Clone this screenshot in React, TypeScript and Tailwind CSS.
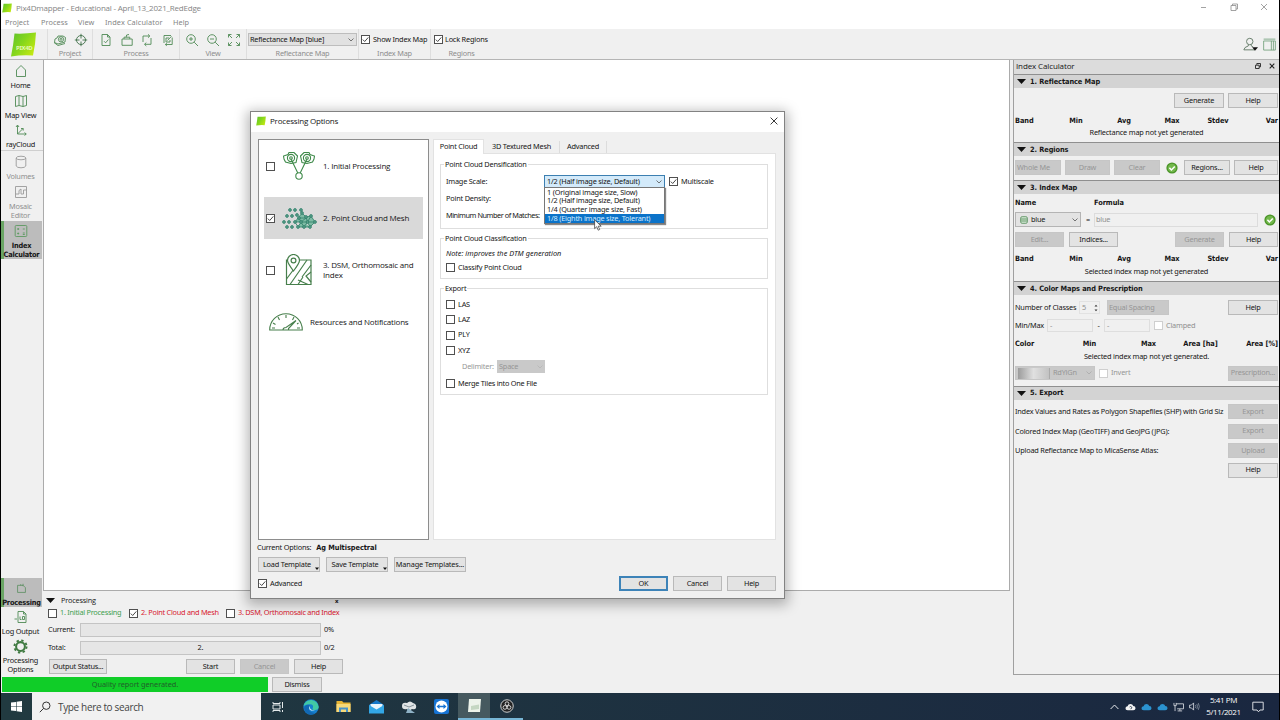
import type { ReactNode } from "react"
import clsx from "clsx"

const GREEN = "#4f8a55"

type BoxProps = { className?: string; children?: ReactNode }

function Button({ className, children, disabled, primary }: BoxProps & { disabled?: boolean; primary?: boolean }) {
  return (
    <button
      className={clsx(
        "flex h-[15px] shrink-0 items-center justify-center overflow-hidden whitespace-nowrap",
        primary && "border-2 border-[#3d83b8] bg-[#e3e3e3]",
        disabled && "border border-[#c6c6c6] bg-[#c9c9c9] text-[#969696]",
        !primary && !disabled && "border border-[#b9b9b9] bg-[#e3e3e3]",
        className,
      )}
    >
      {children}
    </button>
  )
}

function Check({ checked, faded, className }: { checked?: boolean; faded?: boolean; className?: string }) {
  return (
    <span
      className={clsx(
        "block h-[9px] w-[9px] shrink-0 border bg-white",
        faded ? "border-[#cfcfcf]" : "border-[#505050]",
        className,
      )}
    >
      {checked && (
        <svg viewBox="0 0 7 7" className="block h-[7px] w-[7px]" fill="none" stroke="#333" strokeWidth="0.9">
          <path d="M0.8 3.6 2.7 5.5 6.3 1.4" />
        </svg>
      )}
    </span>
  )
}

function Chevron({ color = "#555" }: { color?: string }) {
  return (
    <svg viewBox="0 0 6 4" className="h-1 w-1.5 shrink-0" fill="none" stroke={color} strokeWidth="0.8">
      <path d="M0.5 0.5 3 3 5.5 0.5" />
    </svg>
  )
}

function Pix4dMark({ className }: { className?: string }) {
  return (
    <svg viewBox="0 0 26 25" className={className}>
      <defs>
        <linearGradient id="pix" x1="0" y1="0" x2="1" y2="0.7">
          <stop offset="0" stopColor="#5cc02c" />
          <stop offset="0.5" stopColor="#84d61c" />
          <stop offset="1" stopColor="#c2e812" />
        </linearGradient>
      </defs>
      <path d="M4 1.5 Q14 2 25.5 0.5 Q25 12 22.5 23.5 Q12 22.5 0.5 24.5 Q3 12 4 1.5Z" fill="url(#pix)" />
    </svg>
  )
}

function Icon({ children, size = "h-[14px] w-[14px]", color = GREEN }: { children: ReactNode; size?: string; color?: string }) {
  return (
    <svg viewBox="0 0 14 14" className={clsx("block shrink-0", size)} fill="none" stroke={color} strokeWidth="0.9">
      {children}
    </svg>
  )
}

function ToolGroup({ label, className, children }: BoxProps & { label: string }) {
  return (
    <div className={clsx("flex shrink-0 flex-col border-r border-[#dedede]", className)}>
      <div className="flex h-[21px] items-center">{children}</div>
      <div className="flex h-[8px] items-center justify-center text-[#8d8d8d]">{label}</div>
    </div>
  )
}

function Toolbar() {
  return (
    <div className="flex h-[31px] shrink-0 border-b border-[#b5b5b5] bg-[#f0f0f0]">
      <div className="flex w-[47px] shrink-0 items-center border-r border-[#dedede] pl-[9px]">
        <div className="relative">
          <Pix4dMark className="h-[25px] w-[27px]" />
          <span className="absolute left-[6px] top-[13px] text-[6px] font-bold leading-none tracking-[-0.3px] text-[#e2f8b8]">PIX4D</span>
        </div>
      </div>
      <ToolGroup label="Project" className="w-[45px]">
        <div className="flex gap-[7px] pl-[5px]">
          <Icon>
            <path d="M2 6 4 5 5 3H10L12.5 4.5 12 9 5 11 1.5 9.5Z" />
            <circle cx="8" cy="6.3" r="2.6" />
            <circle cx="8" cy="6.3" r="1" />
            <path d="M1 9.5 5 12.5 12 10.5" />
          </Icon>
          <Icon color="#3f6f48">
            <circle cx="7" cy="7" r="4.5" />
            <path d="M7 0.8V5.5M7 8.5V13.2M0.8 7H5.5M8.5 7H13.2" />
          </Icon>
        </div>
      </ToolGroup>
      <ToolGroup label="Process" className="w-[87px]">
        <div className="flex gap-[6.7px] pl-[6px]">
          <Icon>
            <path d="M3 1.5H8.5L11 4V12.5H3ZM8.5 1.5V4H11M5 8.2 6.6 9.8 9.4 6.6" />
          </Icon>
          <Icon>
            <path d="M2 6H12.2V12.3H2ZM4 6V4.2H9.8V6M6.2 4.2 6.6 2 9 1.5" />
          </Icon>
          <Icon>
            <path d="M3 9V3H9.5M8 1.3 9.8 3 8 4.7M11 5V11.3H4.8M6.3 9.6 4.5 11.3 6.3 13" />
          </Icon>
          <Icon>
            <path d="M3 10V2.5H10M11.2 4.5V11.5H4.5M5 5H8M5 5V9H9V7M6.5 7.5 10.5 3.3M5.8 10.2 4.3 11.5 5.8 12.8" />
          </Icon>
        </div>
      </ToolGroup>
      <ToolGroup label="View" className="w-[67px]">
        <div className="flex gap-[7px] pl-[5px]">
          <Icon>
            <circle cx="6" cy="6" r="4.3" />
            <path d="M9.2 9.2 13 13M6 4V8M4 6H8" />
          </Icon>
          <Icon>
            <circle cx="6" cy="6" r="4.3" />
            <path d="M9.2 9.2 13 13M4 6H8" />
          </Icon>
          <Icon>
            <path d="M1.5 4.5V1.5H4.5M1.5 1.5 5 5M9.5 1.5H12.5V4.5M12.5 1.5 9 5M1.5 9.5V12.5H4.5M1.5 12.5 5 9M12.5 9.5V12.5H9.5M12.5 12.5 9 9" />
          </Icon>
        </div>
      </ToolGroup>
      <ToolGroup label="Reflectance Map" className="w-[112px]">
        <div className="ml-[1px] flex h-[13px] w-[109px] items-center justify-between border border-[#bdbdbd] bg-[#e1e1e1] pl-[1px] pr-[2px]">
          Reflectance Map [blue]
          <Chevron />
        </div>
      </ToolGroup>
      <ToolGroup label="Index Map" className="w-[72px]">
        <Check checked className="ml-[2px] mr-[3px]" />
        Show Index Map
      </ToolGroup>
      <ToolGroup label="Regions" className="w-[61px] border-r-0">
        <Check checked className="ml-[3px] mr-[2px]" />
        Lock Regions
      </ToolGroup>
      <div className="ml-auto flex items-center gap-[5px] pr-[3px]">
        <Icon size="h-[15px] w-[15px]" color="#667d6a">
          <circle cx="6.3" cy="4.2" r="3" />
          <path d="M5 7V8.3Q1 9.5 0.8 12H11M7.7 7V8.3L9.5 9.3" />
          <path d="M8.5 9.5H14L11.2 12.8Z" fill="#111" stroke="none" />
        </Icon>
        <Icon size="h-[13px] w-[13px]" color="#6f9f78">
          <path d="M0.7 1.2H13.3M0.7 3.2H13.3V13H0.7ZM9 3.2V13M11.2 3.2V13" />
        </Icon>
      </div>
    </div>
  )
}

function SideItem({ label, icon, className, selected, faded }: { label: string; icon: ReactNode; className?: string; selected?: boolean; faded?: boolean }) {
  return (
    <div
      className={clsx(
        "flex shrink-0 flex-col items-center",
        selected ? "mr-px border-l-[3px] border-[#6aa564] bg-[#bcbcbc] font-bold" : "pr-[3px]",
        faded && "text-[#8f8f8f]",
        className,
      )}
    >
      <div className={clsx("flex h-[20px] shrink-0 items-center justify-center", selected && "-ml-[4px]")}>{icon}</div>
      <div className={clsx("whitespace-pre text-center leading-[9px]", selected && "-ml-[3px] font-['DejaVu_Sans_Condensed','Noto_Sans'] tracking-[-0.2px]")}>{label}</div>
    </div>
  )
}

function Sidebar() {
  return (
    <div className="flex w-[42px] shrink-0 flex-col pt-[1px]">
      <SideItem label="Home" className="h-[29.5px]" icon={<Icon><path d="M2.5 6 7 1.5 11.5 6V12.5H2.5Z" /></Icon>} />
      <SideItem label="Map View" className="h-[29.5px]" icon={<Icon><path d="M1.5 2.5 5 1.5V11.5L1.5 12.5ZM5 1.5 9 2.5V12.5L5 11.5M9 2.5 12.5 1.5V11.5L9 12.5" /></Icon>} />
      <SideItem label="rayCloud" className="h-[30px]" icon={<Icon><path d="M3.5 11V2.5M2 4 3.5 2 5 4M3.5 11H12M10.5 9.6 12.3 11 10.5 12.5M3.5 11 9 5.5M7 5.5H9.2V7.6" /></Icon>} />
      <div className="mb-[1px] h-px shrink-0 bg-[#cfcfcf]" />
      <SideItem faded label="Volumes" className="h-[29.5px]" icon={<Icon color="#9a9a9a"><ellipse cx="7" cy="3" rx="4.8" ry="1.8" /><path d="M2.2 3V11Q3 12.8 7 12.8T11.8 11V3" /></Icon>} />
      <SideItem faded label={"Mosaic\nEditor"} className="h-[39px]" icon={<Icon color="#9a9a9a"><path d="M1.5 1.5H12.5V12.5H1.5ZM1.5 9H5V5.5L7 4V9H9.5V5H12.5" /></Icon>} />
      <SideItem
        selected
        label={"Index\nCalculator"}
        className="h-[38px]"
        icon={
          <Icon color="#5d9a62">
            <rect x="1.2" y="1.5" width="11.6" height="11" rx="1" />
            <path d="M4.2 4V6M3.2 5H5.2M8.8 5H10.8M4.2 8.5V10.5M3.2 9.5H5.2M8.8 9H10.8M8.8 10.5H10.8" />
          </Icon>
        }
      />
      <div className="grow" />
      <SideItem
        selected
        label="Processing"
        className="h-[29px]"
        icon={<Icon size="h-[11px] w-[11px]"><path d="M2 3H9L12 6V12H2ZM9 1V4M6 3V1.5" /></Icon>}
      />
      <SideItem
        label="Log Output"
        className="h-[29px]"
        icon={<Icon><path d="M4 1.5H9.5L12 4V12.5H4ZM9.5 1.5V4H12M0.5 9H3M6 6.5V9.5H7.5M8.5 6.5H10.5V9.5H8.5Z" /></Icon>}
      />
      <SideItem
        label={"Processing\nOptions"}
        className="h-[39px]"
        icon={
          <Icon size="h-[15px] w-[15px]" color="#3f7a41">
            <circle cx="7" cy="7" r="4.1" strokeWidth="1.9" />
            <circle cx="7" cy="7" r="5.7" strokeWidth="1.7" strokeDasharray="2.2 2.277" />
          </Icon>
        }
      />
    </div>
  )
}

function Section({ title, className, children }: BoxProps & { title: string }) {
  return (
    <section className={clsx("flex shrink-0 flex-col", className)}>
      <h2 className="flex h-[14px] shrink-0 items-center gap-[4px] border-t border-[#8f8f8f] bg-[#d3d3d3] pl-[3px] font-['DejaVu_Sans_Condensed','Noto_Sans'] font-bold tracking-[-0.06px]">
        <svg viewBox="0 0 9 5" className="h-[5px] w-[9px]"><path d="M0 0H9L4.5 5Z" fill="#111" /></svg>
        {title}
      </h2>
      {children}
    </section>
  )
}

function StatsHeader() {
  return (
    <div className="grid h-[10px] grid-cols-[37px_48px_48px_48px_44px_1fr] items-center text-center font-['DejaVu_Sans_Condensed','Noto_Sans'] font-bold tracking-[-0.05px]">
      <span className="text-left">Band</span>
      <span>Min</span>
      <span>Avg</span>
      <span>Max</span>
      <span>Stdev</span>
      <span className="text-right">Var</span>
    </div>
  )
}

function OkBadge({ className }: { className?: string }) {
  return (
    <svg viewBox="0 0 12 12" className={clsx("h-3 w-3 shrink-0", className)}>
      <circle cx="6" cy="6" r="5.6" fill="#4b9429" />
      <circle cx="6" cy="6" r="4.3" fill="#72b84b" />
      <path d="M3.4 5.8 5.4 8 8.8 4.4" fill="none" stroke="#fff" strokeWidth="1.5" />
    </svg>
  )
}

function IndexCalculator() {
  return (
    <aside className="flex h-[615px] w-[266px] shrink-0 flex-col border border-r-0 border-t-0 border-[#a0a0a0]">
      <div className="flex h-[14px] shrink-0 items-center bg-[#dcdcdc] pb-[2px] pl-[2px] pr-[4px] font-['Open_Sans'] text-[8px] tracking-[-0.12px]">
        <span className="grow">Index Calculator</span>
        <svg viewBox="0 0 6 6" className="mr-[8px] h-[6px] w-[6px]" fill="none" stroke="#222" strokeWidth="0.9"><path d="M1.8 1.8V0.5H5.5V3.8H4.2M0.5 2.2H4.2V5.5H0.5Z" /></svg>
        <svg viewBox="0 0 6 6" className="h-[6px] w-[6px]" fill="none" stroke="#222" strokeWidth="1.1"><path d="M0.7 0.7 5.3 5.3M5.3 0.7 0.7 5.3" /></svg>
      </div>
      <Section title="1. Reflectance Map" className="h-[68px]">
        <div className="mt-[5px] flex justify-end gap-[4px] pr-px">
          <Button className="w-[50px]">Generate</Button>
          <Button className="w-[50px]">Help</Button>
        </div>
        <div className="pl-px pr-px pt-[8px]"><StatsHeader /></div>
        <p className="h-[12px] text-center leading-[12px]">Reflectance map not yet generated</p>
      </Section>
      <Section title="2. Regions" className="h-[38px]">
        <div className="flex items-center pl-px pt-[4px]">
          <Button disabled className="w-[46px] justify-start pl-px tracking-[-0.2px]">Whole Me</Button>
          <Button disabled className="ml-[4px] w-[45px]">Draw</Button>
          <Button disabled className="ml-[4px] w-[46px]">Clear</Button>
          <OkBadge className="mx-[6px]" />
          <Button className="w-[46px]">Regions...</Button>
          <Button className="ml-[4px] w-[44px]">Help</Button>
        </div>
      </Section>
      <Section title="3. Index Map" className="h-[101px]">
        <div className="mt-[4px] flex h-[10px] items-center pl-px font-['DejaVu_Sans_Condensed','Noto_Sans'] font-bold tracking-[-0.05px]">
          <span className="w-[79px]">Name</span>
          <span>Formula</span>
        </div>
        <div className="mt-[4px] flex h-[15px] items-center pl-px">
          <div className="flex h-[15px] w-[66px] items-center border border-[#b4b4b4] bg-[#e3e3e3] pl-[4px] pr-[2px]">
            <svg viewBox="0 0 8 8" className="mr-[3px] h-2 w-2" fill="#c8dfca" stroke="#4f8a55" strokeWidth="0.7"><rect x="0.6" y="0.6" width="6.8" height="6.8" rx="1.6" /><path d="M0.6 3H7.4M0.6 5H7.4" /></svg>
            <span className="grow">blue</span>
            <Chevron />
          </div>
          <span className="w-[13px] pl-[1px] text-center">=</span>
          <div className="flex h-[14px] w-[164px] items-center border border-[#dcdcdc] pl-[1px] text-[#8f8f8f]">blue</div>
          <OkBadge className="ml-[6px]" />
        </div>
        <div className="mt-[5px] flex pl-px pr-px">
          <Button disabled className="w-[49px]">Edit...</Button>
          <Button className="ml-[5px] w-[49px]">Indices...</Button>
          <Button disabled className="ml-auto w-[49px]">Generate</Button>
          <Button className="ml-[5px] w-[49px]">Help</Button>
        </div>
        <div className="px-px pt-[7px]"><StatsHeader /></div>
        <p className="h-[13px] text-center leading-[14px]">Selected index map not yet generated</p>
      </Section>
      <Section title="4. Color Maps and Prescription" className="h-[104.5px]">
        <div className="mt-[5px] flex items-center px-px">
          <span className="w-[64px]">Number of Classes</span>
          <span className="flex h-[13px] w-[21px] items-center justify-between border border-[#e2e2e2] pl-[2px] text-[#8f8f8f]">
            5
            <svg viewBox="0 0 4 8" className="mr-px h-2 w-1" fill="#333"><path d="M0.5 2.5 2 0.8 3.5 2.5ZM0.5 5.5 2 7.2 3.5 5.5Z" /></svg>
          </span>
          <Button disabled className="ml-[7px] h-[13px] w-[62px] justify-start pl-px">Equal Spacing</Button>
          <Button className="ml-auto w-[50px]">Help</Button>
        </div>
        <div className="mt-[4px] flex h-[13px] items-center pl-px">
          <span className="w-[32px]">Min/Max</span>
          <span className="h-[13px] w-[46px] border border-[#dedede] pl-[2px] leading-[10px] text-[#8f8f8f]">-</span>
          <span className="w-[11px] text-center">-</span>
          <span className="h-[13px] w-[46px] border border-[#dedede] pl-[2px] leading-[10px] text-[#8f8f8f]">-</span>
          <Check faded className="ml-[4px] mr-[3px]" />
          <span className="text-[#8f8f8f]">Clamped</span>
        </div>
        <div className="mt-[7px] grid h-[10px] shrink-0 grid-cols-[45px_59px_59px_45px_1fr] items-center px-px text-center font-['DejaVu_Sans_Condensed','Noto_Sans'] font-bold tracking-[-0.05px]">
          <span className="text-left">Color</span>
          <span>Min</span>
          <span>Max</span>
          <span className="-mx-2">Area [ha]</span>
          <span className="text-right">Area [%]</span>
        </div>
        <p className="h-[13px] shrink-0 text-center leading-[14px]">Selected index map not yet generated.</p>
        <div className="mt-[4px] flex h-[14px] items-center px-px text-[#969696]">
          <div className="flex h-[14px] w-[80px] items-center border border-[#c6c6c6] bg-[#c9c9c9] px-[2px]">
            <span className="mr-[3px] h-[11px] w-[32px] border-r border-[#aaa] bg-linear-to-r from-[#9c9c9c] via-[#e0e0e0] to-[#c2c2c2]" />
            <span className="grow">RdYlGn</span>
            <Chevron color="#aaa" />
          </div>
          <Check faded className="ml-[4px] mr-[3px]" />
          Invert
          <Button disabled className="ml-auto w-[50px]">Prescription...</Button>
        </div>
      </Section>
      <Section title="5. Export">
        {[
          ["Index Values and Rates as Polygon Shapefiles (SHP) with Grid Siz", "Export"],
          ["Colored Index Map (GeoTIFF) and GeoJPG (JPG):", "Export"],
          ["Upload Reflectance Map to MicaSense Atlas:", "Upload"],
          ["", "Help"],
        ].map(([text, action], i) => (
          <div key={i} className="mt-[4.5px] flex h-[15px] items-center justify-between px-px">
            <span className="whitespace-nowrap leading-[13px]">{text}</span>
            <Button disabled={action !== "Help"} className="w-[50px]">{action}</Button>
          </div>
        ))}
      </Section>
    </aside>
  )
}

function ProcessingPanel() {
  return (
    <div className="flex h-[84px] shrink-0 flex-col pl-[5px]">
      <div className="flex h-[17px] items-center pt-[2px]">
        <svg viewBox="0 0 9 5" className="-ml-[2px] mr-[6px] h-[5px] w-[9px]"><path d="M0 0H9L4.5 5Z" fill="#111" /></svg>
        <span className="w-[274px] font-['Open_Sans']">Processing</span>
        <span className="text-[6px] font-bold">x</span>
      </div>
      <div className="flex h-[10px] items-center tracking-[-0.26px] text-[#d8182f]">
        <Check className="mr-[3px]" />
        <span className="w-[69px] text-[#3f9f50]">1. Initial Processing</span>
        <Check checked className="mr-[3px]" />
        <span className="w-[85px]">2. Point Cloud and Mesh</span>
        <Check className="mr-[3px]" />
        <span>3. DSM, Orthomosaic and Index</span>
      </div>
      <div className="mt-[5px] flex h-[14px] items-center">
        <span className="w-[32px]">Current:</span>
        <span className="h-[14px] w-[241px] border border-[#c4c4c4] bg-[#e6e6e6]" />
        <span className="ml-[3px]">0%</span>
      </div>
      <div className="mt-[4px] flex h-[14px] items-center">
        <span className="w-[32px]">Total:</span>
        <span className="flex h-[14px] w-[241px] items-center justify-center border border-[#c4c4c4] bg-[#e6e6e6]">2.</span>
        <span className="ml-[3px]">0/2</span>
      </div>
      <div className="mt-[4px] flex pl-px">
        <Button className="w-[58px]">Output Status...</Button>
        <Button className="ml-[79px] w-[49px]">Start</Button>
        <Button disabled className="ml-[5px] w-[49px]">Cancel</Button>
        <Button className="ml-[5px] w-[49px]">Help</Button>
      </div>
    </div>
  )
}

function OptionRow({ text, icon, checked, selected, noCheck }: { text: string; icon: ReactNode; checked?: boolean; selected?: boolean; noCheck?: boolean }) {
  return (
    <div className={clsx("flex h-[42px] shrink-0 items-center whitespace-pre", selected && "bg-[#d9d9d9]", noCheck ? "pl-[5px]" : "pl-[2px]")}>
      {!noCheck && <Check checked={checked} className="mr-[7px]" />}
      <div className={clsx("flex shrink-0", noCheck ? "w-[41px]" : "w-[41px]")}>{icon}</div>
      <span className="font-['Open_Sans'] text-[8px] leading-[10px] tracking-[-0.2px]">{text}</span>
    </div>
  )
}

const CLOUD_DOTS = [
  [8, 3], [13, 3], [19, 3], [5, 9], [10, 9], [15, 8], [2, 15], [7, 15], [5, 20], [10, 20],
]
const MESH_DOTS = [
  [20, 6], [17, 11], [24, 10], [29, 9], [13, 15], [19, 15], [25.5, 15], [33, 15], [16, 20], [22, 20], [28, 20],
]

function StepList() {
  return (
    <div className="flex h-[401px] w-[171px] shrink-0 flex-col gap-[10px] border border-[#8d8d8d] bg-white px-[5px] pt-[5px]">
      <OptionRow
        text="1. Initial Processing"
        icon={
          <svg viewBox="0 0 34 30" className="h-[30px] w-[34px]" fill="none" stroke="#3f8a4a" strokeWidth="1.1">
            <path d="M2 8 1.5 5 6 3.500 7 1.500H12L15.5 5 14 11.500 9 12.500 3.500 11ZM32 8 32.500 5 28 3.500 27 1.500H22L18.5 5 20 11.500 25 12.500 30.500 11Z" />
            <circle cx="9" cy="7" r="3.6" /><circle cx="25" cy="7" r="3.6" />
            <circle cx="9" cy="7" r="1.3" /><circle cx="25" cy="7" r="1.3" />
            <path d="M9 8 15.8 22M25 8 18.2 22" /><circle cx="17" cy="25" r="3.2" />
          </svg>
        }
      />
      <OptionRow
        selected
        checked
        text="2. Point Cloud and Mesh"
        icon={
          <svg viewBox="0 0 35 23" className="h-[23px] w-[35px]" fill="#5aa08c" stroke="#2f7f68" strokeWidth="0.8">
            <path d="M20 6 13 15 16 20H28L33 15 29 9 24 10ZM17 11H24L19 15H25.500L29 9M13 15H19L16 20M17 11 19 15 22 20 25.500 15 28 20M24 10 25.500 15H33" fill="#7dbba4" />
            {[...CLOUD_DOTS, ...MESH_DOTS].map(([x, y], i) => <circle key={i} cx={x} cy={y} r="1.4" />)}
          </svg>
        }
      />
      <OptionRow
        text={"3. DSM, Orthomosaic and\nIndex"}
        icon={
          <svg viewBox="0 0 34 32" className="h-[32px] w-[34px]" fill="none" stroke="#477f4c" strokeWidth="1.2">
            <path d="M6 6H4.500V30.500H29V6H17" />
            <path d="M4.500 25 15 11M8 30.500 25 6M16 30.500 21 23M29 11 20 23M29 18 24 22 29 28M16 26 26 30.500" />
            <path d="M11.500 17Q5.500 9 5.500 6.500A6 6 0 0 1 17.500 6.500Q17.500 9 11.500 17Z" fill="#fff" />
            <circle cx="11.500" cy="6.500" r="2.400" />
          </svg>
        }
      />
      <OptionRow
        noCheck
        text="Resources and Notifications"
        icon={
          <svg viewBox="0 0 34 20" className="h-[20px] w-[34px]" fill="none" stroke="#477f4c" strokeWidth="1.1">
            <path d="M0.700 18A16.300 16.300 0 0 1 33.300 18Z" />
            <path d="M17 3V6M9 5 10.500 8M4 11 6.500 12.500M3 16H6M25 5 23.500 8M28 16H31M29.500 11 28 12M14 18Q14 15.500 17 15.500L27 8.500 19.500 16.500V18" />
          </svg>
        }
      />
    </div>
  )
}

function Group({ title, className, children }: BoxProps & { title: string }) {
  return (
    <fieldset className={clsx("w-[328px] shrink-0 border border-[#dedede] pl-[5px]", className)}>
      <legend className="-ml-[2px] h-[8px] px-[1px] leading-[8px]">{title}</legend>
      {children}
    </fieldset>
  )
}

const SCALES = [
  "1 (Original image size, Slow)",
  "1/2 (Half image size, Default)",
  "1/4 (Quarter image size, Fast)",
  "1/8 (Eighth image size, Tolerant)",
]

function PointCloudTab() {
  return (
    <div className="flex min-h-0 grow flex-col border border-[#e2e2e2] bg-white pl-[6px] pt-[6px]">
      <Group title="Point Cloud Densification" className="h-[69px]">
        <div className="mt-[7px] flex h-[13px] items-center">
          <span className="w-[98px]">Image Scale:</span>
          <div className="relative flex h-[13px] w-[121px] items-center justify-between border border-[#3c7fb1] bg-[#d3eafa] pl-[2px] pr-[2px]">
            1/2 (Half image size, Default)
            <Chevron />
            <ul className="absolute -left-px top-[11px] z-10 w-[121px] border border-[#777] bg-white shadow-[1px_1px_1px_#888]">
              {SCALES.map((scale, i) => (
                <li key={scale} className={clsx("flex h-[8.7px] items-center whitespace-nowrap pl-[2px]", i === 3 && "bg-[#0b73c9] text-[#d5ecff]")}>
                  {scale}
                </li>
              ))}
            </ul>
            <svg viewBox="0 0 8 12" className="absolute left-[49px] top-[43px] z-20 h-[12px] w-[8px]">
              <path d="M0.600 0.800V9.600L2.700 7.700 4.200 11.200 5.700 10.500 4.200 7.200H7.200Z" fill="#fff" stroke="#333" strokeWidth="0.700" />
            </svg>
          </div>
          <Check checked className="ml-[4px] mr-[3px]" />
          Multiscale
        </div>
        <p className="mt-[4px] h-[13px] leading-[13px]">Point Density:</p>
        <p className="mt-[4px] h-[13px] whitespace-nowrap leading-[13px] tracking-[-0.46px]">Minimum Number of Matches:</p>
      </Group>
      <Group title="Point Cloud Classification" className="mt-[5px] h-[45px]">
        <p className="mt-[7px] h-[9px] italic leading-[9px] tracking-[0.02px]">Note: improves the DTM generation</p>
        <div className="mt-[5px] flex items-center gap-[3px]"><Check />Classify Point Cloud</div>
      </Group>
      <Group title="Export" className="mt-[5px] h-[111px]">
        <div className="mt-[8px] flex flex-col gap-[6.300px]">
          {["LAS", "LAZ", "PLY", "XYZ"].map((format) => (
            <div key={format} className="flex h-[9px] items-center gap-[3px]"><Check />{format}</div>
          ))}
        </div>
        <div className="mt-[5px] flex h-[14px] items-center text-[#969696]">
          <span className="w-[51px] pl-[16px]">Delimiter:</span>
          <span className="flex h-[13px] w-[48px] items-center justify-between bg-[#c9c9c9] px-[2px]">Space<Chevron color="#b5b5b5" /></span>
        </div>
        <div className="mt-[5px] flex items-center gap-[3px] tracking-[-0.25px]"><Check />Merge Tiles into One File</div>
      </Group>
    </div>
  )
}

function ProcessingOptionsDialog() {
  return (
    <div className="absolute left-[249px] top-[111px] flex h-[488px] w-[535px] flex-col border border-[#828282] bg-[#f0f0f0] shadow-[0_3px_12px_3px_rgba(0,0,0,0.28)]">
      <div className="flex h-[20px] shrink-0 items-center bg-white pb-[2px] pl-[5px] pr-[6px] font-['Open_Sans'] text-[8px] tracking-[-0.2px]">
        <Pix4dMark className="mr-[4px] h-[10px] w-[10px]" />
        <span className="grow">Processing Options</span>
        <svg viewBox="0 0 8 8" className="h-[8px] w-[8px]" fill="none" stroke="#222" strokeWidth="0.9"><path d="M0.600 0.600 7.400 7.400M7.400 0.600 0.600 7.400" /></svg>
      </div>
      <div className="flex h-[408px] shrink-0 gap-[4px] pl-[7px] pt-[7px]">
        <StepList />
        <div className="flex h-[401px] w-[343px] flex-col">
          <div className="flex h-[14px] shrink-0 items-end">
            <span className="z-10 -mb-px flex h-[15px] w-[51px] items-center justify-center border border-b-0 border-[#e2e2e2] bg-white">Point Cloud</span>
            <span className="flex h-[12px] w-[76px] items-center justify-center border-r border-[#dcdcdc]">3D Textured Mesh</span>
            <span className="flex h-[12px] w-[47px] items-center justify-center border-r border-[#dcdcdc]">Advanced</span>
          </div>
          <PointCloudTab />
        </div>
      </div>
      <div className="mt-[3px] flex h-[10px] shrink-0 items-center pl-[6px]">
        Current Options:
        <b className="ml-[5px] font-['DejaVu_Sans_Condensed','Noto_Sans'] tracking-[-0.05px]">Ag Multispectral</b>
      </div>
      <div className="mt-[4px] flex shrink-0 gap-[6px] pl-[7px]">
        {["Load Template", "Save Template"].map((label) => (
          <Button key={label} className="w-[62px] gap-[4px] pl-[4px]">
            {label}
            <svg viewBox="0 0 4 3" className="mt-[7px] h-[3px] w-[4px] shrink-0"><path d="M0 0.500H4L2 3Z" fill="#111" /></svg>
          </Button>
        ))}
        <Button className="w-[72px] tracking-[-0.15px]">Manage Templates...</Button>
      </div>
      <div className="mt-[4px] flex h-[15px] shrink-0 items-center pl-[7px] pr-[8px]">
        <Check checked className="mr-[3px]" />
        <span className="grow">Advanced</span>
        <Button primary className="w-[49px]">OK</Button>
        <Button className="ml-[5px] w-[49px]">Cancel</Button>
        <Button className="ml-[5px] w-[49px]">Help</Button>
      </div>
    </div>
  )
}

function Taskbar() {
  return (
    <div className="flex h-[27px] shrink-0 items-center bg-linear-to-r from-[#213a40] to-[#1a2740] text-white">
      <div className="flex w-[31px] shrink-0 justify-center">
        <svg viewBox="0 0 11 11" className="ml-[-1px] h-[11px] w-[11px]" fill="#fff"><path d="M0 1.600 5 0.900V5.200H0ZM5.600 0.800 11 0V5.200H5.600ZM0 5.800H5V10.100L0 9.400ZM5.600 5.800H11V11L5.600 10.200Z" /></svg>
      </div>
      <div className="flex h-[27px] w-[229px] shrink-0 items-center bg-[#f1f1f1] pl-[7px] font-['Open_Sans'] text-[10px] tracking-[-0.35px] text-[#444]">
        <svg viewBox="0 0 12 12" className="mr-[7px] h-[12px] w-[12px]" fill="none" stroke="#333" strokeWidth="1"><circle cx="7.300" cy="4.700" r="3.700" /><path d="M4.600 7.400 0.800 11.200" /></svg>
        Type here to search
      </div>
      <div className="flex h-full items-center">
        <span className="flex w-[33px] justify-center">
          <svg viewBox="0 0 12 12" className="h-3 w-3" fill="none" stroke="#e4e9ea" strokeWidth="1"><path d="M1 1V2.500H8V1M1 11V9.500H8V11M1 4H8V8H1ZM10.500 1V7M10.500 9V11" /></svg>
        </span>
        <span className="flex w-[33px] justify-center">
          <svg viewBox="0 0 16 16" className="h-4 w-4">
            <circle cx="8" cy="8" r="7.700" fill="#1681cf" />
            <path d="M0.500 7A7.700 7.700 0 0 1 15.700 8Q15.500 11 12 11T9.800 9Q11 5.500 7 5.200 3 5 0.500 7Z" fill="#42c9a4" />
            <path d="M6 8Q5 13.500 12 14 8 16.800 4 14.500 0 11 1.500 7.500 4 5 7 6.300 6.200 7 6 8Z" fill="#1268b4" />
            <path d="M7 7Q6 11.300 12 11.500 8.500 12.500 6.500 10.500 5.500 8.500 7 7Z" fill="#d8f0f2" />
          </svg>
        </span>
        <span className="flex w-[33px] justify-center">
          <svg viewBox="0 0 15 13" className="h-[13px] w-[15px]"><path d="M0.500 1H6L7.500 2.500H14.500V12H0.500Z" fill="#e8b534" /><path d="M0.500 4H14.500V12H0.500Z" fill="#f8d979" /><path d="M3 12V7.500H12V12H10V9.500H5V12Z" fill="#4a93c9" /></svg>
        </span>
        <span className="flex w-[32px] justify-center">
          <svg viewBox="0 0 15 14" className="h-[14px] w-[15px]"><path d="M0 5 7.500 0 15 5V13H0Z" fill="#1578c8" /><path d="M1.500 4H13.500V8L7.500 11 1.500 8Z" fill="#e9f5fb" /><path d="M0 5 7.500 9.500 15 5V13.500H0Z" fill="#33a7e6" /></svg>
        </span>
        <span className="flex w-[33px] justify-center">
          <svg viewBox="0 0 16 14" className="h-[14px] w-4"><path d="M1 6Q1 2 6 3 9 0 12 3 16 4 15 8 14 10 11 9L8 11 6 9Q1 10 1 6Z" fill="#dfe4e6" /><path d="M7 8 14 13H5Z" fill="#8fb2c6" /><path d="M3 5 8 7 13 5" fill="none" stroke="#84929a" /></svg>
        </span>
        <span className="flex w-[33px] justify-center">
          <svg viewBox="0 0 15 15" className="h-[15px] w-[15px]"><rect width="15" height="15" rx="2" fill="#1673d4" /><circle cx="7.500" cy="7.500" r="6" fill="#fff" /><path d="M2.500 7.500 5.500 5V6.700H9.500V5L12.500 7.500 9.500 10V8.300H5.500V10Z" fill="#1673d4" /></svg>
        </span>
        <span className="flex h-full w-[32px] items-center justify-center border-b-2 border-[#78b6d6] bg-[#46595f]">
          <svg viewBox="0 0 15 15" className="h-[15px] w-[15px]"><path d="M2 1H14L13 14H1Z" fill="#edf3ea" /><path d="M4 8 12 6.500V11L4 12Z" fill="#c5d7c2" /></svg>
        </span>
        <span className="flex h-full w-[33px] items-center justify-center border-b-2 border-[#78b6d6]">
          <svg viewBox="0 0 15 15" className="h-[14px] w-[14px]" fill="none" stroke="#dadada"><circle cx="7.500" cy="7.500" r="6.700" fill="#222" /><circle cx="7.500" cy="5" r="2" /><circle cx="5.300" cy="9" r="2" /><circle cx="9.700" cy="9" r="2" /></svg>
        </span>
      </div>
      <div className="ml-auto flex items-center pr-[15px]">
        <svg viewBox="0 0 9 6" className="h-[6px] w-[9px]" fill="none" stroke="#e8eaee" strokeWidth="1"><path d="M0.600 5 4.500 1 8.400 5" /></svg>
        {["#f4f4f4", "#2b92cf", "#2b92cf"].map((fill, i) => (
          <svg key={i} viewBox="0 0 12 8" className={clsx("h-[8px] w-[11px]", i === 0 ? "ml-[6px]" : "ml-[5px]")}>
            <path d="M3 7.500Q0.300 7.300 0.500 5 0.900 3.300 2.800 3.300 3.500 0.700 6 0.700 8.300 0.700 9 3 11.500 3.200 11.500 5.300 11.400 7.500 9 7.500Z" fill={fill} />
            {i === 0 && <path d="M5 4A1.300 1.300 0 1 1 6 6" fill="none" stroke="#243246" strokeWidth="0.900" />}
          </svg>
        ))}
        <svg viewBox="0 0 12 11" className="ml-[5px] h-[10px] w-[11px]" fill="none" stroke="#dfe3e8" strokeWidth="0.900"><path d="M3.500 2H11.500V7.500H4.500M7.500 7.500V9.500M5 9.800H10M1 1V4H3.500V1M2.200 4V10" /></svg>
        <svg viewBox="0 0 12 10" className="ml-[5px] h-[9px] w-[11px]" fill="none" stroke="#dfe3e8" strokeWidth="0.900"><path d="M0.500 3.500H2.500L5 1V9L2.500 6.500H0.500Z" /><path d="M7 3.500Q8 5 7 6.500M8.600 2.300Q10.200 5 8.600 7.700M10.200 1.200Q12.500 5 10.200 8.800" stroke="#8b95a3" /></svg>
        <div className="mb-[1px] ml-[5px] w-[37px] text-center font-['Open_Sans'] text-[8px] leading-[12px] tracking-[-0.4px]">
          5:41 PM
          <br />
          5/11/2021
        </div>
        <svg viewBox="0 0 12 12" className="ml-[10px] h-[12px] w-[12px]" fill="none" stroke="#eceef2" strokeWidth="0.900"><path d="M0.800 1.200H11.200V9H8L6.500 10.800 5 9H0.800Z" /></svg>
      </div>
    </div>
  )
}

export default function App() {
  return (
    <div className="relative flex h-[720px] w-[1280px] flex-col overflow-hidden border-x border-black bg-[#f0f0f0] font-['Noto_Sans',sans-serif] text-[7.33px] leading-none tracking-[-0.2px] text-[#161616]">
      <div className="flex h-[15px] shrink-0 items-center bg-white pl-[1px] pr-[11px] font-['Open_Sans'] text-[8px] tracking-[-0.22px] text-[#858585]">
        <Pix4dMark className="mr-[4px] h-[10px] w-[10px]" />
        <span className="grow">Pix4Dmapper - Educational - April_13_2021_RedEdge</span>
        <svg viewBox="0 0 68 8" className="mb-[2px] h-[8px] w-[68px]" fill="none" stroke="#8c8c8c" strokeWidth="0.800"><path d="M1 4.500H6M31 2.500H36V7.500H31ZM32.500 2.500V1H37.500V6H36M61 1 67 7M67 1 61 7" /></svg>
      </div>
      <nav className="flex h-[14px] shrink-0 items-center bg-white pl-[4px] pt-[2px] tracking-[0.05px] text-[#858585]">
        <span className="w-[36px]">Project</span>
        <span className="w-[37px]">Process</span>
        <span className="w-[27px]">View</span>
        <span className="w-[68px] tracking-[0.1px]">Index Calculator</span>
        <span>Help</span>
      </nav>
      <Toolbar />
      <div className="flex h-[615px] shrink-0">
        <Sidebar />
        <div className="flex w-[967px] shrink-0 flex-col">
          <div className="h-[531px] shrink-0 border border-t-0 border-[#ababab] bg-white" />
          <ProcessingPanel />
        </div>
        <div className="w-[3px] shrink-0" />
        <IndexCalculator />
      </div>
      <div className="flex h-[18px] shrink-0 items-start gap-[4px] pl-[1px] pt-[2px]">
        <div className="flex h-[15px] w-[266px] items-center justify-center bg-[#10cd28] tracking-[-0.05px] text-[#20602a]">Quality report generated.</div>
        <Button className="w-[50px]">Dismiss</Button>
      </div>
      <Taskbar />
      <ProcessingOptionsDialog />
    </div>
  )
}
